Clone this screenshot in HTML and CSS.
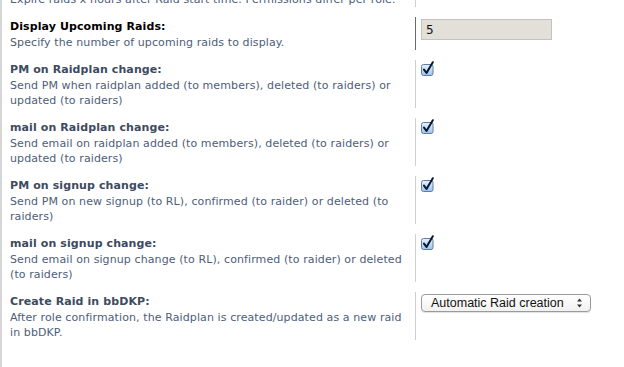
FILE: index.html
```html
<!DOCTYPE html>
<html>
<head>
<meta charset="utf-8">
<link rel="stylesheet" href="styles.css">
</head>
<body>
<div class="panel">
  <dl class="row row-cut">
    <dt><label>Raid expiry:</label><span class="desc">Expire raids x hours after Raid start time. Permissions differ per role.</span></dt>
    <dd></dd>
  </dl>
  <dl class="row row-focus">
    <dt><label>Display Upcoming Raids:</label><span class="desc">Specify the number of upcoming raids to display.</span></dt>
    <dd><input class="text" type="text" value="5"></dd>
  </dl>
  <dl class="row">
    <dt><label>PM on Raidplan change:</label><span class="desc">Send PM when raidplan added (to members), deleted (to raiders) or updated (to raiders)</span></dt>
    <dd><span class="check"><svg width="14" height="15" viewBox="0 0 14 15"><defs><linearGradient id="g1" x1="0" y1="0" x2="0" y2="1"><stop offset="0" stop-color="#e8f2ff"/><stop offset="1" stop-color="#9cc3ee"/></linearGradient></defs><rect x="0.5" y="3.5" width="11.5" height="11" rx="2" fill="url(#g1)" stroke="#5f7ca6"/><path d="M3 8.6 L5.5 12 L11.8 1.2" fill="none" stroke="#0b1730" stroke-width="2" stroke-linecap="round" stroke-linejoin="round"/></svg></span></dd>
  </dl>
  <dl class="row">
    <dt><label>mail on Raidplan change:</label><span class="desc">Send email on raidplan added (to members), deleted (to raiders) or updated (to raiders)</span></dt>
    <dd><span class="check"><svg width="14" height="15" viewBox="0 0 14 15"><rect x="0.5" y="3.5" width="11.5" height="11" rx="2" fill="url(#g1)" stroke="#5f7ca6"/><path d="M3 8.6 L5.5 12 L11.8 1.2" fill="none" stroke="#0b1730" stroke-width="2" stroke-linecap="round" stroke-linejoin="round"/></svg></span></dd>
  </dl>
  <dl class="row">
    <dt><label>PM on signup change:</label><span class="desc">Send PM on new signup (to RL), confirmed (to raider) or deleted (to raiders)</span></dt>
    <dd><span class="check"><svg width="14" height="15" viewBox="0 0 14 15"><rect x="0.5" y="3.5" width="11.5" height="11" rx="2" fill="url(#g1)" stroke="#5f7ca6"/><path d="M3 8.6 L5.5 12 L11.8 1.2" fill="none" stroke="#0b1730" stroke-width="2" stroke-linecap="round" stroke-linejoin="round"/></svg></span></dd>
  </dl>
  <dl class="row">
    <dt><label>mail on signup change:</label><span class="desc">Send email on signup change (to RL), confirmed (to raider) or deleted (to raiders)</span></dt>
    <dd><span class="check"><svg width="14" height="15" viewBox="0 0 14 15"><rect x="0.5" y="3.5" width="11.5" height="11" rx="2" fill="url(#g1)" stroke="#5f7ca6"/><path d="M3 8.6 L5.5 12 L11.8 1.2" fill="none" stroke="#0b1730" stroke-width="2" stroke-linecap="round" stroke-linejoin="round"/></svg></span></dd>
  </dl>
  <dl class="row">
    <dt><label>Create Raid in bbDKP:</label><span class="desc">After role confirmation, the Raidplan is created/updated as a new raid in bbDKP.</span></dt>
    <dd><span class="select"><span class="select-text">Automatic Raid creation</span><svg class="arrows" width="7" height="10" viewBox="0 0 7 10"><path d="M3.5 0.5 L6 3.5 L1 3.5 Z M3.5 9.5 L6 6.5 L1 6.5 Z" fill="#333"/></svg></span></dd>
  </dl>
</div>
</body>
</html>
```
FILE: styles.css
```css
html, body {
  margin: 0;
  padding: 0;
  background: #ffffff;
  overflow: hidden;
}
.panel {
  height: 367px;
  border-left: 2px solid #d6d6d6;
  padding-left: 8px;
  font-family: "DejaVu Sans", Verdana, sans-serif;
  font-size: 11px;
  overflow: hidden;
}
.row {
  display: flex;
  margin: 0 0 10px 0;
}
.row-cut {
  margin-top: -26px;
}
.row dt {
  width: 405px;
  flex: none;
  padding-top: 2px;
  letter-spacing: 0.1px;
}
.row dt label {
  display: block;
  font-weight: bold;
  line-height: 16px;
  color: #3d4a5f;
}
.row .desc {
  display: block;
  line-height: 15px;
  color: #4d5d78;
}
.row dd {
  margin: 0;
  flex: 1;
  border-left: 1px solid #cfcfcf;
  padding: 2px 0 0 5px;
}
.row-focus dt label {
  color: #000000;
}
.row-focus dd {
  border-left-color: #6a6a6a;
}
.text {
  box-sizing: border-box;
  width: 131px;
  height: 21px;
  margin: 0;
  padding: 1px 4px 0 4px;
  border: 1px solid #c4c2bd;
  background: #e3dfd9;
  font-family: "DejaVu Sans", Verdana, sans-serif;
  font-size: 12px;
  color: #111;
  outline: none;
}
.check {
  display: block;
  width: 14px;
  height: 15px;
  margin-top: -1px;
}
.check svg {
  display: block;
}
.select {
  box-sizing: border-box;
  display: flex;
  align-items: center;
  width: 170px;
  height: 18px;
  border: 1px solid #9a9a9a;
  border-radius: 4px;
  background: linear-gradient(#ffffff, #f1f1f1);
  box-shadow: 0 1px 1px rgba(0, 0, 0, 0.12);
  padding: 0 7px 0 9px;
  font-family: "Liberation Sans", Arial, sans-serif;
  font-size: 12.5px;
  color: #111;
}
.select-text {
  flex: 1;
}
.arrows {
  display: block;
}
```
